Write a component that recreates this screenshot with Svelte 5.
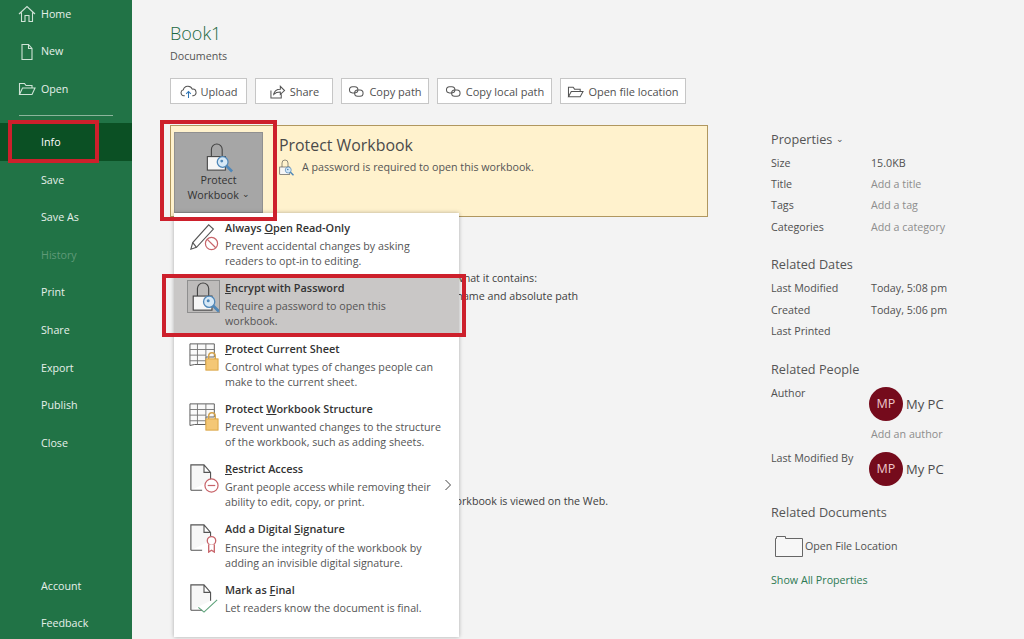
<script>
  const top = ['Home', 'New', 'Open'];
  const mid = ['Info', 'Save', 'Save As', 'History', 'Print', 'Share', 'Export', 'Publish', 'Close'];
  const actions = [
    { label: 'Upload', icon: 'upload', w: 77 },
    { label: 'Share', icon: 'share', w: 78 },
    { label: 'Copy path', icon: 'link', w: 88 },
    { label: 'Copy local path', icon: 'link', w: 115 },
    { label: 'Open file location', icon: 'folder', w: 126 }
  ];
  const menu = [
    { pre: 'Always ', u: 'O', post: 'pen Read-Only', a: 'Prevent accidental changes by asking', b: 'readers to opt-in to editing.', icon: 'pencil' },
    { pre: '', u: 'E', post: 'ncrypt with Password', a: 'Require a password to open this', b: 'workbook.', icon: 'lock', on: true },
    { pre: '', u: 'P', post: 'rotect Current Sheet', a: 'Control what types of changes people can', b: 'make to the current sheet.', icon: 'sheet' },
    { pre: 'Protect ', u: 'W', post: 'orkbook Structure', a: 'Prevent unwanted changes to the structure', b: 'of the workbook, such as adding sheets.', icon: 'sheet' },
    { pre: '', u: 'R', post: 'estrict Access', a: 'Grant people access while removing their', b: 'ability to edit, copy, or print.', icon: 'restrict', more: true },
    { pre: 'Add a Digital ', u: 'S', post: 'ignature', a: 'Ensure the integrity of the workbook by', b: 'adding an invisible digital signature.', icon: 'ribbon' },
    { pre: 'Mark as ', u: 'F', post: 'inal', a: 'Let readers know the document is final.', b: '', icon: 'final' }
  ];
</script>

{#snippet lockIcon()}
  <path d="M6 15V7a6 6 0 0 1 12 0v8" fill="none" stroke="#444" stroke-width="1.2" />
  <rect x="1.500" y="15" width="20" height="15" fill="#f6f6f6" stroke="#444" stroke-width="1.2" />
  <circle cx="18.500" cy="21" r="6" fill="#d6e8f6" stroke="#4f87b8" stroke-width="1.400" />
  <path d="M22.500 25l6.500 6.500" stroke="#4f87b8" stroke-width="3" />
  <circle cx="17.500" cy="20" r="1.600" fill="#4f87b8" />
{/snippet}

{#snippet docShape()}
  <path d="M2 29V2h14l7 8v9M16 2v8h7M2 29h12" fill="#f7f7f7" stroke="#555" stroke-width="1.2" />
{/snippet}

<div class="page">
  <aside class="rail">
    <nav class="group">
      {#each top as t, i}
        <div class="nav">
          <svg class="nav-ic" viewBox="0 0 18 18" fill="none" stroke="#cfe3d6" stroke-width="1.1">
            {#if i === 0}
              <path d="M1 9l8-7.5L17 9M3.5 7.5V16.5h3.5v-6h4v6h3.5V7.5" />
            {:else if i === 1}
              <path d="M4 1.5h6.5l3.5 4v11H4zM10.500 1.500v4h3.500" />
            {:else}
              <path d="M1.500 14.500v-11h5l1.500 2h6v2.500M1.500 14.500l3-6.500h12.500l-3 6.500z" />
            {/if}
          </svg>
          <span>{t}</span>
        </div>
      {/each}
    </nav>
    <div class="rule"></div>
    <nav class="group">
      {#each mid as t}
        <div class="nav" class:active={t === 'Info'} class:off={t === 'History'}><span>{t}</span></div>
      {/each}
    </nav>
    <nav class="group bottom">
      <div class="nav"><span>Account</span></div>
      <div class="nav"><span>Feedback</span></div>
    </nav>
  </aside>

  <main class="main">
    <h1>Book1</h1>
    <p class="loc">Documents</p>
    <div class="actions">
      {#each actions as a}
        <div class="btn" style="width:{a.w}px">
          <svg class="btn-ic" viewBox="0 0 18 16" fill="none" stroke="#555" stroke-width="1.1">
            {#if a.icon === 'upload'}
              <path d="M5 12.500H4a3.200 3.200 0 0 1-.5-6.300A5 5 0 0 1 13 5.500a3.400 3.400 0 0 1 1 7h-1" />
              <path d="M9 15V8M6.500 10.500L9 8l2.500 2.500" stroke="#2e75b5" />
            {:else if a.icon === 'share'}
              <path d="M2 7v8h11v-4M5 11c.5-3.500 3-5.500 7-5.500V2.500l4.500 4.500L12 11V8.500c-3 0-5.500 1-7 2.500z" />
            {:else if a.icon === 'link'}
              <rect x="1.500" y="3" width="9" height="6.500" rx="3.250" />
              <rect x="7" y="6.500" width="9" height="6.500" rx="3.250" />
            {:else}
              <path d="M1.500 13.500v-10h5l1.500 2h6v2M1.500 13.500l3-5.500h12.500l-3 5.500z" />
            {/if}
          </svg>
          <span>{a.label}</span>
        </div>
      {/each}
    </div>

    <div class="columns">
      <div class="left">
        <section class="banner">
          <div class="protect">
            <svg class="protect-ic" viewBox="0 0 30 32">{@render lockIcon()}</svg>
            <div class="protect-tx">Protect<br />Workbook <i class="chev">⌄</i></div>
          </div>
          <div class="banner-tx">
            <h2>Protect Workbook</h2>
            <div class="pw">
              <svg class="pw-ic" viewBox="0 0 30 32">{@render lockIcon()}</svg>
              <span>A password is required to open this workbook.</span>
            </div>
          </div>
        </section>
        <p class="tail t1">what it contains:</p>
        <p class="tail t2">name and absolute path</p>
        <p class="tail t3">workbook is viewed on the Web.</p>
      </div>

      <div class="props">
        <h3 class="first">Properties <i class="chev">⌄</i></h3>
        <div class="kv"><span>Size</span><b>15.0KB</b></div>
        <div class="kv"><span>Title</span><b class="mute">Add a title</b></div>
        <div class="kv"><span>Tags</span><b class="mute">Add a tag</b></div>
        <div class="kv"><span>Categories</span><b class="mute">Add a category</b></div>

        <h3 class="dates">Related Dates</h3>
        <div class="kv"><span>Last Modified</span><b>Today, 5:08 pm</b></div>
        <div class="kv"><span>Created</span><b>Today, 5:06 pm</b></div>
        <div class="kv"><span>Last Printed</span><b></b></div>

        <h3 class="people">Related People</h3>
        <div class="person">
          <span class="who">Author</span>
          <div class="avatar">MP</div><span class="pc">My PC</span>
        </div>
        <div class="add">Add an author</div>
        <div class="person second">
          <span class="who">Last Modified By</span>
          <div class="avatar">MP</div><span class="pc">My PC</span>
        </div>

        <h3 class="docs">Related Documents</h3>
        <div class="open">
          <svg class="folder" viewBox="0 0 28 21" fill="#f7f7f7" stroke="#666" stroke-width="1">
            <path d="M.5 20.500V2.500h1V.5h9v2h17v18z" />
          </svg>
          <span>Open File Location</span>
        </div>
        <div class="all">Show All Properties</div>
      </div>
    </div>
  </main>

  <div class="menu">
    {#each menu as m}
      <div class="row" class:on={m.on}>
        <div class="row-ic" class:boxed={m.on}>
          <svg viewBox="0 0 32 32" width="30" height="30">
            {#if m.icon === 'pencil'}
              <path d="M2 29l2-7L21 3l5 4.500L8 27z" fill="#fff" stroke="#555" stroke-width="1.200" />
              <path d="M4 22l4 5" stroke="#555" stroke-width="1.200" />
              <circle cx="24" cy="23" r="6.500" fill="#fff" stroke="#c8646a" stroke-width="1.300" />
              <path d="M19.500 18.500l9 9" stroke="#c8646a" stroke-width="1.300" />
            {:else if m.icon === 'lock'}
              <g transform="translate(3 0)">{@render lockIcon()}</g>
            {:else if m.icon === 'sheet'}
              <path d="M1 2h26v14H18v8H6l-5 1z" fill="#fafafa" stroke="#555" stroke-width="1" />
              <path d="M1 8h26M1 14h17M1 20h17M9 2v22M18 2v14" stroke="#777" stroke-width="1" />
              <path d="M21 18v-3a3.500 3.500 0 0 1 7 0v3" fill="none" stroke="#d2a24c" stroke-width="1.500" />
              <rect x="18" y="18" width="13" height="12" fill="#f4c775" stroke="#d9a341" />
            {:else if m.icon === 'restrict'}
              {@render docShape()}
              <circle cx="24" cy="24" r="7" fill="#fff" stroke="#c8646a" stroke-width="1.300" />
              <path d="M20 24h8" stroke="#c8646a" stroke-width="1.300" />
            {:else if m.icon === 'ribbon'}
              {@render docShape()}
              <circle cx="24" cy="19" r="4.500" fill="#fff" stroke="#c8646a" stroke-width="1.400" />
              <path d="M21 23v8l3-2 3 2v-8" fill="#fff" stroke="#c8646a" stroke-width="1.400" />
            {:else}
              {@render docShape()}
              <path d="M10 26l6 5 14-13" fill="none" stroke="#5da27a" stroke-width="1.200" />
            {/if}
          </svg>
        </div>
        <div class="row-tx">
          <div class="row-t">{m.pre}<u>{m.u}</u>{m.post}</div>
          <div class="row-d">{m.a}</div>
          {#if m.b}<div class="row-d">{m.b}</div>{/if}
        </div>
        {#if m.more}
          <svg class="more" viewBox="0 0 8 12" fill="none" stroke="#444" stroke-width="1"><path d="M1.500 1l5 5-5 5" /></svg>
        {/if}
      </div>
    {/each}
  </div>

  <div class="mark m1"></div>
  <div class="mark m2"></div>
  <div class="mark m3"></div>
</div>

<style>
  :global(body) { margin: 0; background: #f3f3f3; }
  .page {
    position: relative; display: flex; width: 1024px; height: 639px; overflow: hidden;
    background: #f3f3f3; color: #444;
    font-family: "Open Sans", "Noto Sans", sans-serif; font-size: 10.700px;
  }
  h1, h2, h3, p { margin: 0; font-weight: 400; }
  i { font-style: normal; }

  .rail {
    flex: 0 0 132px; display: flex; flex-direction: column; height: 644px;
    background: #217346; color: #e6f0ea; margin-top: -5px;
  }
  .group { display: flex; flex-direction: column; }
  .nav { position: relative; height: 37.600px; display: flex; align-items: center; padding-left: 41px; flex: none; }
  .nav-ic { position: absolute; left: 18px; top: 10px; width: 18px; height: 18px; }
  .active { background: #0b5024; color: #fff; }
  .off { color: #5f9a78; }
  .rule { height: 1px; background: #8cb59c; margin: 7.500px 19px 7px; flex: none; }
  .bottom { margin-top: auto; margin-bottom: -3px; }

  .main { flex: 1; padding: 21px 0 0 38px; min-width: 0; }
  h1 { font-size: 18px; font-weight: 300; line-height: 25px; color: #1b6840; }
  .loc { margin-top: 2px; line-height: 16px; color: #555; }
  .actions { display: flex; gap: 8px; margin-top: 14px; }
  .btn {
    box-sizing: border-box; height: 26px; display: flex; align-items: center; justify-content: center; gap: 4px;
    background: #fff; border: 1px solid #c6c6c6; color: #505050; font-size: 11px; white-space: nowrap;
  }
  .btn-ic { width: 17px; height: 15px; flex: none; }

  .columns { display: flex; margin-top: 21px; }
  .left { width: 538px; flex: none; }
  .banner {
    box-sizing: border-box; height: 92px; display: flex; padding: 6px 3px;
    background: #fff2cd; border: 1px solid #b0975f; align-items: flex-start;
  }
  .protect {
    flex: 0 0 89px; height: 81px; box-sizing: border-box; background: #a6a6a6; border: 1px solid #909090;
    display: flex; flex-direction: column; align-items: center; padding-top: 9px; color: #333; line-height: 15px; text-align: center;
  }
  .protect-ic { width: 27px; height: 31px; margin-left: 2px; }
  .chev { font-size: 9px; position: relative; top: -2px; }
  .banner-tx { margin-left: 16px; padding-top: 1px; }
  .banner-tx h2 { font-size: 15.900px; line-height: 24px; color: #4a4a4a; }
  .pw { display: flex; align-items: center; gap: 8px; margin-top: 1px; line-height: 18px; color: #555; }
  .pw-ic { width: 15px; height: 17px; }
  .tail { line-height: 18px; color: #3e3e3e; text-align: right; white-space: nowrap; }
  .t1 { width: 367px; margin-top: 52px; }
  .t2 { width: 408px; }
  .t3 { width: 438px; margin-top: 187px; }

  .props { margin-left: 63px; width: 240px; color: #505050; }
  .props h3 { font-size: 12.700px; line-height: 18px; color: #555; }
  .first { margin-top: 5px; }
  .kv { display: flex; height: 21.400px; align-items: center; }
  .first + .kv { margin-top: 2px; }
  .kv span { width: 100px; }
  .kv b { font-weight: 400; }
  .kv .mute, .add { color: #8d8d8d; }
  .props .dates { margin-top: 17px; margin-bottom: 5px; }
  .props .people { margin-top: 18px; }
  .person { display: flex; align-items: flex-start; height: 40px; }
  .who { width: 98px; line-height: 15px; padding-top: 8px; }
  .avatar {
    width: 34px; height: 34px; border-radius: 50%; background: #750b1c; color: #eec9cd; margin-top: 9px;
    display: flex; align-items: center; justify-content: center; font-size: 12.500px; flex: none;
  }
  .pc { font-size: 13px; margin: 17px 0 0 3px; line-height: 18px; color: #4c4c4c; }
  .add { padding-left: 100px; line-height: 16px; margin-top: 8px; }
  .second { margin-top: 1px; }
  .props .docs { margin-top: 20px; }
  .open { display: flex; align-items: center; gap: 2px; margin: 15px 0 0 4px; color: #505050; }
  .folder { width: 28px; height: 21px; flex: none; }
  .all { color: #2d7a53; margin-top: 15px; line-height: 16px; }

  .menu {
    position: absolute; left: 174px; top: 213px; width: 285px; height: 424px; box-sizing: border-box;
    padding-top: 3px; background: #fff; box-shadow: 0 0 4px rgba(0, 0, 0, .3);
  }
  .row { position: relative; height: 60.300px; display: flex; box-sizing: border-box; padding: 3px 0 0 13px; }
  .row.on { background: #c9c7c6; }
  .row-ic { width: 33px; height: 33px; flex: none; display: flex; align-items: center; justify-content: center; margin: 1px 5px 0 0; box-sizing: border-box; border: 1px solid transparent; }
  .boxed { border-color: #8f8f8f; background: #bdbbba; }
  .row-t { font-weight: 600; line-height: 18px; color: #333; font-size: 10.900px; white-space: nowrap; }
  .row-d { line-height: 15px; color: #555; white-space: nowrap; }
  .row-t + .row-d { margin-top: 2.200px; }
  .more { position: absolute; left: 270px; top: 22px; width: 8px; height: 12px; }

  .mark { position: absolute; box-sizing: border-box; border: 4px solid #cd202c; }
  .m1 { left: 8px; top: 120px; width: 91px; height: 43px; }
  .m2 { left: 160px; top: 120px; width: 117px; height: 101px; }
  .m3 { left: 162px; top: 274px; width: 304px; height: 63px; }
</style>
